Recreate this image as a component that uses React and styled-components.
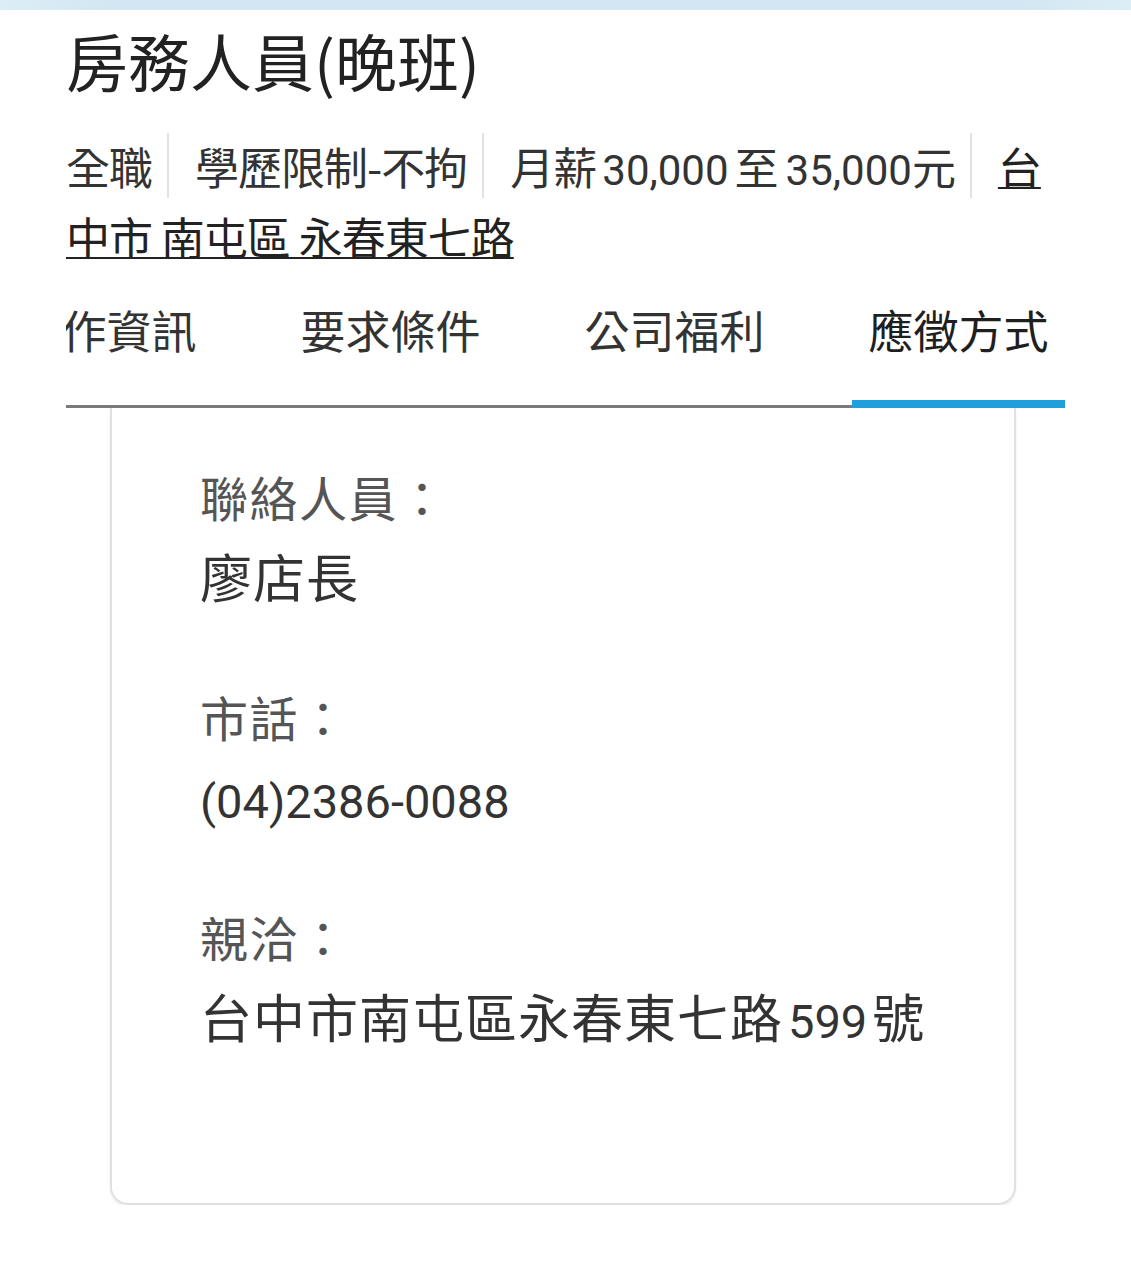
import React, { useLayoutEffect, useRef } from 'react';
import styled, { createGlobalStyle } from 'styled-components';

const GlobalStyle = createGlobalStyle`
    body {
        margin: 0;
        background: #fff;
        font-family: "Noto Sans CJK TC", "Noto Sans", sans-serif;
    }
`;

const TopBar = styled.div`
    height: 10px;
    background: linear-gradient(90deg, #dcedf6 0%, #d2e7f3 10%, #d2e7f3 90%, #dcedf6 100%);
`;

const Page = styled.div`
    padding: 0 66px;
`;

const Title = styled.h1`
    margin: 8px 0 0;
    font-size: 62px;
    line-height: 84px;
    font-weight: 400;
    color: #222;
`;

const Meta = styled.div`
    margin-top: 29px;
    font-size: 44px;
    line-height: 70px;
    color: #333;
    letter-spacing: -1px;
`;

const Sep = styled.span`
    display: inline-block;
    width: 2px;
    height: 65px;
    margin: 2px 26px 0 15px;
    background: #e2e2e2;
    vertical-align: top;
`;

// numbers render in a narrower latin face, with a little CJK/latin spacing
const Num = styled.span`
    font-family: Roboto, "Noto Sans", sans-serif;
    font-size: ${p => p.$size}px;
    line-height: 1;
    letter-spacing: 0;
    margin-left: ${p => p.$left || 0}px;
    margin-right: ${p => p.$right || 0}px;
`;

const Address = styled.a`
    color: #222;
    text-decoration: underline;
    text-decoration-thickness: 2px;
    text-underline-offset: 2px;
`;

const TabBar = styled.div`
    margin-top: 20px;
    overflow-x: auto;
    scrollbar-width: none;
    box-shadow: inset 0 -3px 0 #7a7a7a;
    &::-webkit-scrollbar { display: none; }
`;

const TabTrack = styled.div`
    display: flex;
    gap: 71px;
    width: max-content;
`;

const Tab = styled.div`
    width: 213px;
    flex: none;
    text-align: center;
    padding: 7px 0 46px;
    font-size: 45px;
    line-height: 64px;
    color: ${p => (p.$active ? '#1f1f1f' : '#333')};
    box-shadow: ${p => (p.$active ? 'inset 0 -8px 0 #1fa0dc' : 'none')};
`;

const Card = styled.div`
    margin: 0 49px 0 44px;
    border: 2px solid #e0e0e0;
    border-top: none;
    border-radius: 0 0 18px 18px;
    box-shadow: 0 2px 3px rgba(0, 0, 0, 0.06);
    padding: 54px 0 153px 88px;
    display: flex;
    flex-direction: column;
    gap: 72px;
`;

const Field = styled.div`
    display: flex;
    flex-direction: column;
    gap: 12px;
`;

const Label = styled.div`
    font-size: 48px;
    line-height: 68px;
    letter-spacing: 1.5px;
    color: #555;
`;

const Value = styled.div`
    font-size: 52px;
    line-height: 68px;
    letter-spacing: 1px;
    color: #333;
`;

const tabs = ['工作資訊', '要求條件', '公司福利', '應徵方式'];

const fields = [
    { label: '聯絡人員：', value: '廖店長' },
    { label: '市話：', value: <Num $size={47}>(04)2386-0088</Num> },
    {
        label: '親洽：',
        value: <>台中市南屯區永春東七路<Num $size={47} $left={5} $right={5}>599</Num>號</>,
    },
];

export default function App() {
    const barRef = useRef(null);
    useLayoutEffect(() => {
        // tab strip is scrolled so the active tab sits at the right edge
        if (barRef.current) barRef.current.scrollLeft = 66;
    }, []);

    return (
        <>
            <GlobalStyle />
            <TopBar />
            <Page>
                <Title>房務人員(晚班)</Title>
                <Meta>
                    全職<Sep />學歷限制-不拘<Sep />
                    月薪<Num $size={42} $left={6} $right={6}>30,000</Num>至<Num $size={42} $left={8}>35,000</Num>元<Sep />
                    <Address>台中市 南屯區 永春東七路</Address>
                </Meta>
                <TabBar ref={barRef}>
                    <TabTrack>
                        {tabs.map((t, i) => (
                            <Tab key={t} $active={i === 3}>{t}</Tab>
                        ))}
                    </TabTrack>
                </TabBar>
                <Card>
                    {fields.map(f => (
                        <Field key={f.label}>
                            <Label>{f.label}</Label>
                            <Value>{f.value}</Value>
                        </Field>
                    ))}
                </Card>
            </Page>
        </>
    );
}
